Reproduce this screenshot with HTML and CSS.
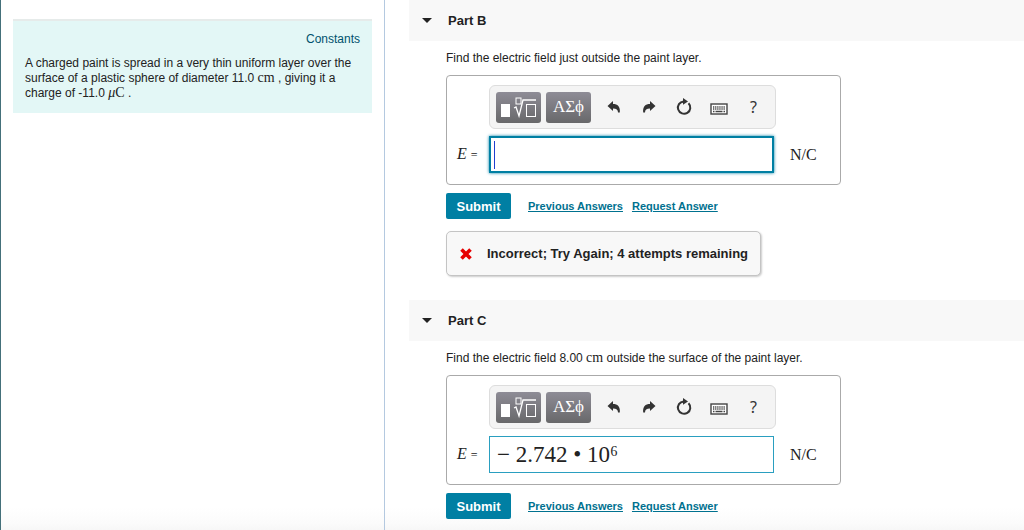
FILE: index.html
```html
<!DOCTYPE html>
<html lang="en">
<head>
<meta charset="UTF-8">
<meta name="viewport" content="width=device-width, initial-scale=1.0">
<title>Charged Paint - Electric Field</title>
<link rel="stylesheet" href="styles.css">
</head>
<body>

<!-- shared icons -->
<svg class="sprite" aria-hidden="true">
  <symbol id="icon-root" viewBox="0 0 36 24">
    <rect x="0" y="9" width="9" height="13" fill="#fff"/>
    <rect x="15" y="3" width="5" height="6" fill="none" stroke="#fff"/>
    <path d="M13 13l2-1 3 9 4-16h13" fill="none" stroke="#fff" stroke-width="1.300"/>
    <rect x="25.500" y="9.500" width="9" height="12" fill="none" stroke="#fff"/>
  </symbol>
  <symbol id="icon-undo" viewBox="0 0 14 14">
    <path d="M6 1v3c4.500 0 7.500 2.500 6.800 8.500h-1.800C11 9.800 9.500 8.500 6 8.500V11L.5 6z" fill="#333"/>
  </symbol>
  <symbol id="icon-redo" viewBox="0 0 14 14">
    <path d="M8 1v3C3.500 4 .5 6.500 1.200 12.500H3C3 9.800 4.500 8.500 8 8.500V11l5.500-5z" fill="#333"/>
  </symbol>
  <symbol id="icon-reset" viewBox="0 0 18 18">
    <path d="M13.500 5.200A6.200 6.200 0 1 1 8.600 3.400" fill="none" stroke="#333" stroke-width="2"/>
    <path d="M8 0l5 3.400-5 3.400z" fill="#333"/>
  </symbol>
  <symbol id="icon-keyboard" viewBox="0 0 18 12">
    <rect x="1" y="1" width="16" height="10" fill="#fff" stroke="#444" stroke-width="1.400"/>
    <path d="M3 4h12M3 6h12" stroke="#444" stroke-width="1.300" stroke-dasharray="1.300 .8"/>
    <path d="M3 8.500h1.500M5.500 8.500h7M13.500 8.500H15" stroke="#444" stroke-width="1.300"/>
  </symbol>
</svg>

<div class="page">
  <aside class="sidebar">
    <div class="problem">
      <a class="constants" href="#">Constants</a>
      <p>A charged paint is spread in a very thin uniform layer over the surface of a plastic sphere of diameter 11.0 <span class="unit">cm</span> , giving it a charge of -11.0 <span class="unit"><i>μ</i>C</span> .</p>
    </div>
  </aside>

  <main class="content">
    <section class="part">
      <h2 class="part-header"><span class="arrow"></span>Part B</h2>
      <div class="part-body">
        <p class="question">Find the electric field just outside the paint layer.</p>
        <div class="answer-box">
          <div class="toolbar">
            <button type="button" class="math-btn" aria-label="Templates"><svg class="root"><use href="#icon-root"/></svg></button>
            <button type="button" class="math-btn">ΑΣϕ</button>
            <button type="button" class="tool-btn" aria-label="Undo"><svg class="turn"><use href="#icon-undo"/></svg></button>
            <button type="button" class="tool-btn" aria-label="Redo"><svg class="turn"><use href="#icon-redo"/></svg></button>
            <button type="button" class="tool-btn" aria-label="Reset"><svg class="reset"><use href="#icon-reset"/></svg></button>
            <button type="button" class="tool-btn" aria-label="Keyboard"><svg class="keyboard"><use href="#icon-keyboard"/></svg></button>
            <button type="button" class="tool-btn">?</button>
          </div>
          <label class="symbol" for="answerB"><i>E</i> <small>=</small></label>
          <div class="field active">
            <input type="text" id="answerB">
            <span class="caret"></span>
          </div>
          <span class="answer-unit">N/C</span>
        </div>
        <div class="actions">
          <button type="submit" class="submit">Submit</button>
          <a href="#">Previous Answers</a>
          <a href="#">Request Answer</a>
        </div>
        <div class="feedback">
          <svg class="cross" viewBox="0 0 14 14"><path d="M2.500 2.500l9 9M11.500 2.500l-9 9" stroke="#e60000" stroke-width="3.600"/></svg>
          <span>Incorrect; Try Again; 4 attempts remaining</span>
        </div>
      </div>
    </section>

    <section class="part">
      <h2 class="part-header"><span class="arrow"></span>Part C</h2>
      <div class="part-body">
        <p class="question">Find the electric field 8.00 <span class="unit">cm</span> outside the surface of the paint layer.</p>
        <div class="answer-box">
          <div class="toolbar">
            <button type="button" class="math-btn" aria-label="Templates"><svg class="root"><use href="#icon-root"/></svg></button>
            <button type="button" class="math-btn">ΑΣϕ</button>
            <button type="button" class="tool-btn" aria-label="Undo"><svg class="turn"><use href="#icon-undo"/></svg></button>
            <button type="button" class="tool-btn" aria-label="Redo"><svg class="turn"><use href="#icon-redo"/></svg></button>
            <button type="button" class="tool-btn" aria-label="Reset"><svg class="reset"><use href="#icon-reset"/></svg></button>
            <button type="button" class="tool-btn" aria-label="Keyboard"><svg class="keyboard"><use href="#icon-keyboard"/></svg></button>
            <button type="button" class="tool-btn">?</button>
          </div>
          <label class="symbol" for="answerC"><i>E</i> <small>=</small></label>
          <div class="field">
            <input type="text" id="answerC" value="− 2.742 • 10⁶">
          </div>
          <span class="answer-unit">N/C</span>
        </div>
        <div class="actions">
          <button type="submit" class="submit">Submit</button>
          <a href="#">Previous Answers</a>
          <a href="#">Request Answer</a>
        </div>
      </div>
    </section>
  </main>
</div>

</body>
</html>
```

FILE: styles.css
```css
* {
  box-sizing: border-box;
}

body {
  margin: 0;
  font-family: "Liberation Sans", Arial, sans-serif;
  font-size: 12px;
  line-height: 15px;
  color: #222;
  background: #fff;
}

p, h2 {
  margin: 0;
}

.sprite {
  display: none;
}

.page {
  display: flex;
  min-height: 100vh;
  background: linear-gradient(to top, #f0f0f0, #fbfbfb 20px, #fff 36px);
}

/* Left column */
.sidebar {
  flex: 0 0 385px;
  padding: 19px 12px 0;
  border-left: 1px solid #44707a;
  border-right: 1px solid #b4c9e0;
}

.problem {
  display: flex;
  flex-direction: column;
  padding: 11px 12px 12px;
  background: #e3f7f6;
  border-top: 2px solid #e6ebea;
}

.constants {
  align-self: flex-end;
  margin-bottom: 9px;
  color: #00526d;
  text-decoration: none;
}

.unit {
  font-family: "Liberation Serif", serif;
  font-size: 14px;
  line-height: 14px;
}

/* Right column */
.content {
  flex: 1;
  padding-left: 24px;
}

.part-header {
  display: flex;
  align-items: center;
  height: 41px;
  padding-left: 13px;
  font-size: 13px;
  background: #f8f8f8;
}

.arrow {
  margin-right: 16px;
  border: 5px solid transparent;
  border-top-color: #222;
  border-bottom: 0;
}

.part-body {
  padding: 10px 20px 24px 37px;
}

.question {
  margin-bottom: 9px;
}

.answer-box {
  display: grid;
  grid-template-columns: 33px 287px 1fr;
  row-gap: 7px;
  align-items: center;
  width: 395px;
  padding: 9px 9px 11px;
  border: 1px solid #aaa;
  border-radius: 4px;
}

.toolbar {
  grid-column: 2;
  display: flex;
  align-items: center;
  height: 44px;
  padding-left: 6px;
  background: #f4f4f4;
  border: 1px solid #ddd;
  border-radius: 6px;
}

.toolbar button {
  display: flex;
  align-items: center;
  justify-content: center;
  padding: 0;
  border: none;
  cursor: pointer;
}

.toolbar .math-btn {
  width: 45px;
  height: 31px;
  margin-right: 5px;
  font-family: "Liberation Serif", serif;
  font-size: 17px;
  color: #fff;
  background: linear-gradient(#8e8c96, #68686a);
  border-radius: 3px;
}

.toolbar .tool-btn {
  flex: 0 0 35px;
  height: 31px;
  font-family: "Noto Sans", sans-serif;
  font-size: 16px;
  color: #333;
  background: none;
}

.root {
  width: 36px;
  height: 24px;
}

.turn {
  width: 14px;
  height: 14px;
}

.reset {
  width: 18px;
  height: 18px;
}

.keyboard {
  width: 18px;
  height: 12px;
  margin-top: 3px;
}

.symbol,
.answer-unit {
  font-family: "Liberation Serif", serif;
  font-size: 16px;
}

.symbol {
  grid-column: 1;
  padding-left: 1px;
}

.symbol small {
  font-size: 12px;
}

.answer-unit {
  padding-left: 14px;
}

.field {
  position: relative;
  height: 37px;
  margin-right: 2px;
}

.field input {
  width: 100%;
  height: 100%;
  padding: 0 7px;
  font-family: "Liberation Serif", serif;
  font-size: 23px;
  color: #222;
  background: #fff;
  border: 1px solid #2a9fc0;
  outline: none;
}

.field.active input {
  border: 2px solid #007fa3;
  box-shadow: 0 0 3px #007fa3;
}

.caret {
  position: absolute;
  left: 5px;
  top: 5px;
  width: 1px;
  height: 28px;
  background: #1f3fd0;
}

.actions {
  display: flex;
  align-items: center;
  gap: 9px;
  margin-top: 8px;
  font-size: 11px;
  font-weight: bold;
}

.actions a {
  color: #00718f;
}

.submit {
  width: 65px;
  height: 26px;
  margin-right: 8px;
  padding: 0;
  font-family: inherit;
  font-size: 13px;
  font-weight: bold;
  color: #fff;
  background: #007fa3;
  border: none;
  border-radius: 2px;
  cursor: pointer;
}

.feedback {
  display: flex;
  align-items: center;
  gap: 14px;
  width: 315px;
  height: 45px;
  margin-top: 12px;
  padding-left: 12px;
  font-size: 13px;
  font-weight: bold;
  background: #f8f8f8;
  border: 1px solid #c4c4c4;
  border-radius: 5px;
  box-shadow: 1px 1px 2px #ccc;
}

.cross {
  width: 14px;
  height: 14px;
}
```
